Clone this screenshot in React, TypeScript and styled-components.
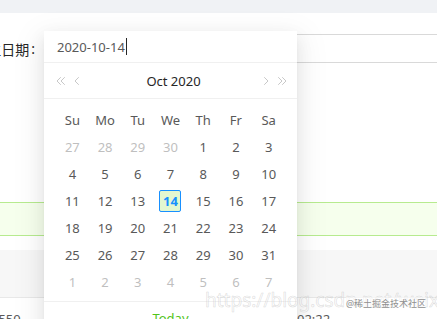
import styled, { createGlobalStyle } from 'styled-components';

const GlobalStyle = createGlobalStyle`
  html, body {
    margin: 0;
    padding: 0;
    background: #fff;
    overflow: hidden;
  }
  body {
    font-family: "Noto Sans", "Noto Sans CJK SC", sans-serif;
    font-size: 14px;
    color: #595959;
  }
`;

type Day = { n: number; muted?: boolean; selected?: boolean };

const weekDays = ['Su', 'Mo', 'Tu', 'We', 'Th', 'Fr', 'Sa'];

const buildDays = (): Day[] => {
  const days: Day[] = [27, 28, 29, 30].map((n) => ({ n, muted: true }));
  for (let n = 1; n <= 31; n++) days.push({ n, selected: n === 14 });
  for (let n = 1; n <= 7; n++) days.push({ n, muted: true });
  return days;
};

const Chevron = ({ double, dir }: { double?: boolean; dir: 'left' | 'right' }) => {
  const flip = dir === 'left' ? 'scale(-1,1) translate(-12,0)' : undefined;
  return (
    <svg width="12" height="10" viewBox="0 0 12 10">
      <g transform={flip} fill="none" stroke="#c8c8c8" strokeWidth="1" strokeLinecap="round">
        {double ? (
          <>
            <path d="M2.5 1.5 L6 5 L2.5 8.5" />
            <path d="M6.5 1.5 L10 5 L6.5 8.5" />
          </>
        ) : (
          <path d="M4.5 1.5 L8 5 L4.5 8.5" />
        )}
      </g>
    </svg>
  );
};

const App = () => {
  const days = buildDays();
  return (
    <Page>
      <GlobalStyle />
      <TopStrip />
      <FormRow>
        <Label>出生日期</Label>
        <Field>
          <InputBox />
          <Popup>
            <PopupInput>
              2020-10-14
              <Caret />
            </PopupInput>
            <Header>
              <NavGroup>
                <NavButton><Chevron double dir="left" /></NavButton>
                <NavButton><Chevron dir="left" /></NavButton>
              </NavGroup>
              <MonthTitle>Oct 2020</MonthTitle>
              <NavGroup>
                <NavButton><Chevron dir="right" /></NavButton>
                <NavButton><Chevron double dir="right" /></NavButton>
              </NavGroup>
            </Header>
            <Body>
              <Grid>
                {weekDays.map((w) => (
                  <WeekDay key={w}>{w}</WeekDay>
                ))}
                {days.map((d, i) => (
                  <Cell key={i}>
                    <CellInner $muted={d.muted} $selected={d.selected}>
                      {d.n}
                    </CellInner>
                  </Cell>
                ))}
              </Grid>
            </Body>
            <Footer>Today</Footer>
          </Popup>
        </Field>
      </FormRow>
      <Alert />
      <TableHead />
      <TableRow>
        <RowCell>1550</RowCell>
        <TimeCell>02:22</TimeCell>
      </TableRow>
      <WatermarkUrl>https://blog.csdn.net/weixin</WatermarkUrl>
      <WatermarkSign>@稀土掘金技术社区</WatermarkSign>
    </Page>
  );
};

const Page = styled.div`
  position: relative;
  width: 437px;
  height: 319px;
  overflow: hidden;
  display: flex;
  flex-direction: column;
`;

const TopStrip = styled.div`
  height: 13px;
  background: #f0f2f5;
  flex-shrink: 0;
`;

const FormRow = styled.div`
  margin-top: 21px;
  height: 29px;
  display: flex;
  align-items: center;
  flex-shrink: 0;
`;

const Label = styled.div`
  width: 44px;
  flex-shrink: 0;
  display: flex;
  justify-content: flex-end;
  overflow: hidden;
  white-space: nowrap;
  color: #262626;
  font-size: 14px;

  &::after {
    content: ':';
    margin: 0 9px 0 2px;
  }
`;

const Field = styled.div`
  position: relative;
  flex: 1;
  height: 29px;
`;

const InputBox = styled.div`
  box-sizing: border-box;
  height: 29px;
  width: calc(100% + 20px);
  border: 1px solid #d9d9d9;
  border-radius: 2px;
`;

const Popup = styled.div`
  position: absolute;
  top: -3px;
  left: 0;
  width: 253px;
  background: #fff;
  z-index: 2;
  font-size: 13px;
  box-shadow: 0 3px 6px -4px rgba(0, 0, 0, 0.12), 0 6px 16px 0 rgba(0, 0, 0, 0.08),
    0 9px 28px 8px rgba(0, 0, 0, 0.05);
`;

const PopupInput = styled.div`
  height: 31px;
  padding: 0 13px;
  display: flex;
  align-items: center;
  border-bottom: 1px solid #f0f0f0;
  color: #595959;
`;

const Caret = styled.span`
  display: inline-block;
  width: 1px;
  height: 17px;
  margin-left: 1px;
  background: #262626;
`;

const Header = styled.div`
  height: 35px;
  padding: 0 9px 0 11px;
  display: flex;
  align-items: center;
  justify-content: space-between;
  border-bottom: 1px solid #f0f0f0;
`;

const NavGroup = styled.div`
  display: flex;
  gap: 4px;
`;

const NavButton = styled.span`
  display: flex;
  align-items: center;
  justify-content: center;
  width: 12px;
  height: 20px;
`;

const MonthTitle = styled.div`
  color: #262626;
  font-weight: 400;
  margin-left: 4px;
`;

const Body = styled.div`
  padding: 7px 12px 6px;
  border-bottom: 1px solid #f0f0f0;
`;

const Grid = styled.div`
  display: grid;
  grid-template-columns: repeat(7, 1fr);
  grid-auto-rows: 27px;
`;

const WeekDay = styled.div`
  display: flex;
  align-items: center;
  justify-content: center;
  color: #595959;
`;

const Cell = styled.div`
  display: flex;
  align-items: center;
  justify-content: center;
`;

const CellInner = styled.div<{ $muted?: boolean; $selected?: boolean }>`
  box-sizing: border-box;
  min-width: 22px;
  height: 22px;
  display: flex;
  align-items: center;
  justify-content: center;
  color: ${(p) => (p.$muted ? '#bfbfbf' : p.$selected ? '#1890ff' : '#595959')};
  font-weight: ${(p) => (p.$selected ? 700 : 400)};
  background: ${(p) => (p.$selected ? '#e3f7d0' : 'transparent')};
  border: 1px solid ${(p) => (p.$selected ? '#1890ff' : 'transparent')};
  border-radius: 2px;
`;

const Footer = styled.div`
  height: 32px;
  line-height: 32px;
  text-align: center;
  color: #52c41a;
`;

const Alert = styled.div`
  margin-top: 139px;
  height: 32px;
  flex-shrink: 0;
  background: #f6ffed;
  border-top: 1px solid #b7eb8f;
  border-bottom: 1px solid #b7eb8f;
`;

const TableHead = styled.div`
  margin-top: 14px;
  height: 47px;
  flex-shrink: 0;
  background: #f7f7f7;
  border-bottom: 1px solid #e8e8e8;
`;

const TableRow = styled.div`
  box-sizing: border-box;
  height: 32px;
  flex-shrink: 0;
  display: flex;
  align-items: center;
  color: #595959;
  font-size: 13px;
  padding-top: 10px;
`;

const RowCell = styled.div`
  width: 306px;
  margin-left: -9px;
`;

const TimeCell = styled.div`
  color: #595959;
`;

const WatermarkUrl = styled.span`
  position: absolute;
  left: 205px;
  top: 287px;
  z-index: 3;
  pointer-events: none;
  font-size: 19px;
  color: rgba(255, 255, 255, 0.35);
  -webkit-text-stroke: 0.6px rgba(175, 175, 175, 0.45);
  white-space: nowrap;
`;

const WatermarkSign = styled.span`
  position: absolute;
  left: 346px;
  top: 297px;
  z-index: 4;
  pointer-events: none;
  font-size: 9px;
  line-height: 14px;
  color: #8f8f8f;
  white-space: nowrap;
  background: rgba(255, 255, 255, 0.55);
`;

export default App;
